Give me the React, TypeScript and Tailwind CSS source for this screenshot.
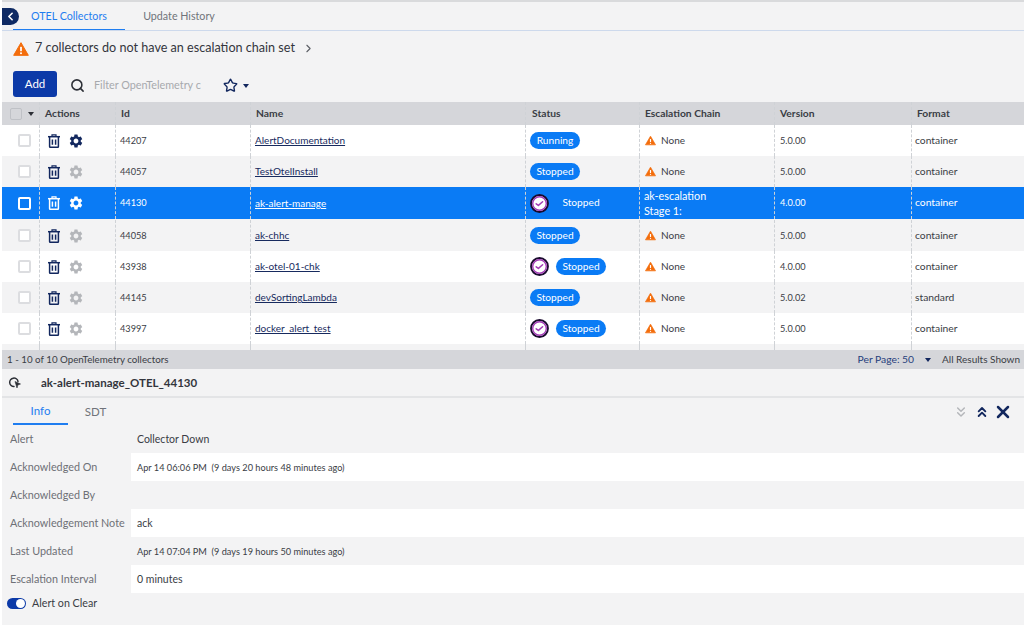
import { ChevronLeft, ChevronRight, ChevronsDown, ChevronsUp, Search, Star, X } from 'lucide-react';
import { MdSettings } from 'react-icons/md';

const GRID = 'grid grid-cols-[39px_76px_135px_275px_114px_135px_137px_113px]';

interface Row {
  id: string;
  name: string;
  status: string;
  badge?: boolean;
  version: string;
  format: string;
  gearOn?: boolean;
  selected?: boolean;
}

const ROWS: Row[] = [
  { id: '44207', name: 'AlertDocumentation', status: 'Running', version: '5.0.00', format: 'container', gearOn: true },
  { id: '44057', name: 'TestOtelInstall', status: 'Stopped', version: '5.0.00', format: 'container' },
  { id: '44130', name: 'ak-alert-manage', status: 'Stopped', badge: true, version: '4.0.00', format: 'container', gearOn: true, selected: true },
  { id: '44058', name: 'ak-chhc', status: 'Stopped', version: '5.0.00', format: 'container' },
  { id: '43938', name: 'ak-otel-01-chk', status: 'Stopped', badge: true, version: '4.0.00', format: 'container' },
  { id: '44145', name: 'devSortingLambda', status: 'Stopped', version: '5.0.02', format: 'standard' },
  { id: '43997', name: 'docker_alert_test', status: 'Stopped', badge: true, version: '5.0.00', format: 'container' },
];

function WarnIcon({ size }: { size: number }) {
  return (
    <svg width={size} height={size} viewBox="0 0 24 24" className="shrink-0">
      <path d="M12 2.5 L23 21.5 H1 Z" fill="#f36d0c" stroke="#f36d0c" strokeWidth="1.5" strokeLinejoin="round" />
      <rect x="10.7" y="8.5" width="2.6" height="7" rx="0.8" fill="#fff" />
      <circle cx="12" cy="18.2" r="1.5" fill="#fff" />
    </svg>
  );
}

function CheckBadge() {
  return (
    <svg width="19" height="19" viewBox="0 0 19 19" className="shrink-0">
      <circle cx="9.5" cy="9.5" r="8.5" fill="#fff" stroke="#1a0a2e" strokeWidth="1.8" />
      <circle cx="9.5" cy="9.5" r="6.8" fill="#fff" stroke="#a23bb5" strokeWidth="1.4" />
      <path d="M6.2 9.8 L8.4 11.4 L12.6 7.8" fill="none" stroke="#a23bb5" strokeWidth="1.5" strokeLinecap="round" strokeLinejoin="round" />
    </svg>
  );
}

function TrashIcon({ className }: { className: string }) {
  return (
    <svg width="12" height="14" viewBox="0 0 12 14" fill="none" stroke="currentColor" className={`shrink-0 ${className}`}>
      <path d="M0 2.7 H12" strokeWidth="1.5" />
      <path d="M4 2.5 V0.8 H8 V2.5" strokeWidth="1.2" />
      <path d="M1.6 3 V12.6 Q1.6 13.3 2.3 13.3 H9.7 Q10.4 13.3 10.4 12.6 V3" strokeWidth="1.5" />
      <path d="M4.4 5.5 V10.8 M7.6 5.5 V10.8" strokeWidth="1.5" />
    </svg>
  );
}

function Cell({ children, className = '' }: { children?: React.ReactNode; className?: string }) {
  return (
    <div className={`flex items-center border-l border-dashed border-[#cfd2d6] first:border-l-0 ${className}`}>
      {children}
    </div>
  );
}

function TableRow({ row, index }: { row: Row; index: number }) {
  const bg = row.selected ? 'bg-[#0a7bf5] text-white h-[33px] border-b border-[#f3f3f4]' : index % 2 === 0 ? 'bg-white text-[#3a3d45] h-[31px]' : 'bg-[#f3f3f4] text-[#3a3d45] h-[31px]';
  return (
    <div className={`${GRID} ${bg} text-[10.3px]`}>
      <Cell className="justify-center pl-[10px]">
        <span className={`w-[13px] h-[13px] rounded-[2px] border-2 ${row.selected ? 'border-white' : 'bg-white border-[#dcdde0]'}`} />
      </Cell>
      <Cell className="pl-[8px] gap-[8px]">
        <TrashIcon className={row.selected ? 'text-white' : 'text-[#12275e]'} />
        <MdSettings size={16} className={row.selected ? 'text-white' : row.gearOn ? 'text-[#12275e]' : 'text-[#b4b6ba]'} />
      </Cell>
      <Cell className="pl-[4px] text-[9.2px]">{row.id}</Cell>
      <Cell className="pl-[4px]">
        <span className={`underline text-[10px] ${row.selected ? 'text-white' : 'text-[#172a5e]'}`}>{row.name}</span>
      </Cell>
      <Cell className="pl-[4px]">
        {row.badge && <CheckBadge />}
        {row.badge && <span className="w-[7px]" />}
        <span className={`inline-flex items-center justify-center w-[50px] h-[17px] rounded-full text-[10.2px] text-white ${row.selected ? '' : 'bg-[#0a7bf5]'}`}>
          {row.status}
        </span>
      </Cell>
      {row.selected ? (
        <Cell className="pl-[4px] flex-col !items-start justify-center gap-[2px] text-[10.8px] leading-[13px]">
          <span>ak-escalation</span>
          <span>Stage 1:</span>
        </Cell>
      ) : (
        <Cell className="pl-[5px] gap-[5px] text-[10px]">
          <WarnIcon size={11} />
          <span>None</span>
        </Cell>
      )}
      <Cell className="pl-[5px] text-[9.2px]">{row.version}</Cell>
      <Cell className="pl-[3px]">{row.format}</Cell>
    </div>
  );
}

function DetailRow({ label, value, white, small }: { label: string; value: string; white?: boolean; small?: boolean }) {
  return (
    <div className="flex h-[28px] items-stretch">
      <div className="w-[129px] pl-[8px] flex items-center text-[10.8px] text-[#6e7076] whitespace-nowrap">{label}</div>
      <div className={`flex-1 pl-[6px] pt-[1px] flex items-center text-[#3a3d45] whitespace-pre ${small ? 'text-[9.2px]' : 'text-[10.5px]'} ${white ? 'bg-white' : ''}`}>
        {value}
      </div>
    </div>
  );
}

export default function App() {
  return (
    <div className="w-[1024px] h-[625px] overflow-hidden bg-[#f3f3f4] border-l-2 border-white font-['Lato','Liberation_Sans',sans-serif]">
      <div className="h-[2px] bg-[#d9dadc] -ml-[2px]" />
      <div className="relative h-[29px] border-b border-[#cdd9ec] flex items-end">
        <span className="absolute left-0 top-[6px] w-[17px] h-[17px] rounded-r-full bg-[#0f2a63] text-white flex items-center justify-center">
          <ChevronLeft size={13} strokeWidth={3} />
        </span>
        <div className="ml-[11px] w-[112px] h-full pt-[1px] flex items-center justify-center text-[10.7px] text-[#1f7df0] border-b border-[#1f7df0]">OTEL Collectors</div>
        <div className="ml-[10px] w-[88px] h-full pt-[1px] flex items-center justify-center text-[10.7px] text-[#70737a]">Update History</div>
      </div>

      <div className="h-[34px] pt-[1px] flex items-center pl-[11px] text-[12.6px] text-[#33363d]">
        <WarnIcon size={16} />
        <span className="ml-[6px]">7 collectors do not have an escalation chain set</span>
        <ChevronRight size={13} strokeWidth={2} className="ml-[7px] text-[#5b5e65]" />
      </div>

      <div className="h-[37px] flex items-center pl-[11px]">
        <button className="w-[44px] h-[26px] rounded-[3px] bg-[#0c3aa8] text-white text-[11.5px]">Add</button>
        <div className="ml-[13px] pt-[4px] flex items-center">
          <Search size={15} strokeWidth={2.5} className="text-[#2c2f36]" />
          <span className="ml-[9px] w-[122px] text-[10.8px] text-[#a7a9ad] whitespace-nowrap overflow-hidden">Filter OpenTelemetry c</span>
          <Star size={15} strokeWidth={2.2} className="ml-[7px] text-[#12275e]" />
          <span className="ml-[5px] w-0 h-0 border-x-[3px] border-x-transparent border-t-[4px] border-t-[#12275e]" />
        </div>
      </div>

      <div className="-ml-[2px]">
        <div className={`${GRID} h-[23px] bg-[#d5d6da] text-[10.3px] font-bold text-[#3a3d45]`}>
          <Cell className="pl-[10px] gap-[6px]">
            <span className="w-[12px] h-[12px] rounded-[2px] border border-[#bfc1c6] bg-[#d5d6da]" />
            <span className="w-0 h-0 border-x-[3px] border-x-transparent border-t-[4px] border-t-[#2c2f36]" />
          </Cell>
          <Cell className="pl-[5px]">Actions</Cell>
          <Cell className="pl-[5px]">Id</Cell>
          <Cell className="pl-[5px]">Name</Cell>
          <Cell className="pl-[6px]">Status</Cell>
          <Cell className="pl-[5px]">Escalation Chain</Cell>
          <Cell className="pl-[5px]">Version</Cell>
          <Cell className="pl-[5px]">Format</Cell>
        </div>
        {ROWS.map((row, i) => (
          <TableRow key={row.id} row={row} index={i} />
        ))}
        <div className={`${GRID} h-[6px] bg-[#f3f3f4]`}>
          {Array.from({ length: 8 }).map((_, i) => (
            <Cell key={i} />
          ))}
        </div>
        <div className="h-[19px] bg-[#d5d6da] flex items-center pl-[7px] pr-[4px] text-[9.75px] text-[#3a3d45]">
          <span>1 - 10 of 10 OpenTelemetry collectors</span>
          <span className="ml-auto text-[10.3px] text-[#27407c]">Per Page: 50</span>
          <span className="ml-[11px] w-0 h-0 border-x-[3px] border-x-transparent border-t-[4px] border-t-[#12275e]" />
          <span className="ml-[11px] text-[10px]">All Results Shown</span>
        </div>
      </div>

      <div className="h-[29px] border-b-2 border-[#e3e4e6] flex items-center pl-[6px]">
        <svg width="14" height="14" viewBox="0 0 14 14" fill="none" stroke="#2c2f36" strokeWidth="1.5">
          <path d="M6 10.5 A4.2 4.2 0 1 1 10 5.5" strokeLinecap="round" />
          <path d="M7 5.5 L12.5 8 L9.8 9 L9 12 Z" fill="#2c2f36" strokeWidth="0.6" strokeLinejoin="round" />
        </svg>
        <span className="ml-[19px] text-[11.5px] font-bold text-[#33363d]">ak-alert-manage_OTEL_44130</span>
      </div>

      <div className="h-[27px] flex items-end relative">
        <div className="ml-[11px] w-[55px] h-full pt-[1px] flex items-center justify-center text-[11.5px] text-[#1f7df0] border-b-2 border-[#1f7df0]">Info</div>
        <div className="w-[55px] h-full flex items-center justify-center text-[11.5px] text-[#70737a]">SDT</div>
        <div className="ml-auto h-full flex items-center pr-[11px]">
          <ChevronsDown size={16} strokeWidth={2.2} className="text-[#b4b6ba]" />
          <ChevronsUp size={16} strokeWidth={2.8} className="ml-[5px] text-[#12275e]" />
          <X size={20} strokeWidth={3} className="ml-[3px] text-[#12275e]" />
        </div>
      </div>

      <DetailRow label="Alert" value="Collector Down" />
      <DetailRow label="Acknowledged On" value="Apr 14 06:06 PM  (9 days 20 hours 48 minutes ago)" white small />
      <DetailRow label="Acknowledged By" value="" />
      <DetailRow label="Acknowledgement Note" value="ack" white />
      <DetailRow label="Last Updated" value="Apr 14 07:04 PM  (9 days 19 hours 50 minutes ago)" small />
      <DetailRow label="Escalation Interval" value="0 minutes" white />
      <div className="h-[20px] flex items-center pl-[5px] text-[10.7px] text-[#3a3d45]">
        <span className="w-[19px] h-[11px] rounded-full bg-[#0c3aa8] flex items-center justify-end pr-[1px]">
          <span className="w-[9px] h-[9px] rounded-full bg-white" />
        </span>
        <span className="ml-[6px]">Alert on Clear</span>
      </div>
    </div>
  );
}
